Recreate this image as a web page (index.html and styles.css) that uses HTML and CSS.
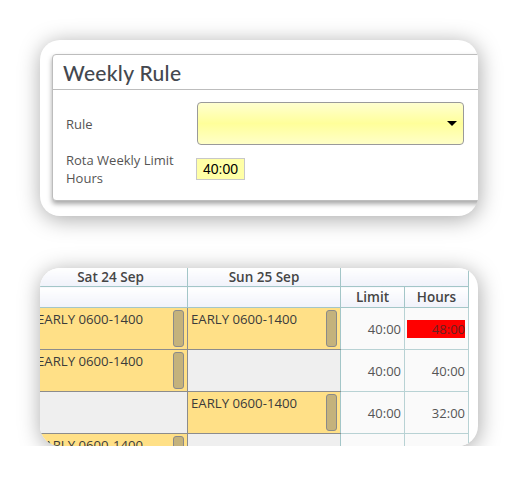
FILE: index.html
```html
<!DOCTYPE html>
<html>
<head>
<meta charset="utf-8">
<link rel="stylesheet" href="styles.css">
</head>
<body>
<div class="page">
  <div class="card card-top">
    <div class="panel">
      <div class="panel-head">Weekly Rule</div>
      <div class="panel-body">
        <div class="form-row">
          <div class="label">Rule</div>
          <div class="select"><span class="caret"></span></div>
        </div>
        <div class="form-row">
          <div class="label">Rota Weekly Limit Hours</div>
          <div class="input">40:00</div>
        </div>
      </div>
    </div>
  </div>

  <div class="card card-bottom">
    <table class="rota">
      <colgroup>
        <col class="c-day"><col class="c-day2"><col class="c-num"><col class="c-num">
      </colgroup>
      <thead>
        <tr class="h1">
          <th>Sat 24 Sep</th>
          <th>Sun 25 Sep</th>
          <th colspan="2"></th>
        </tr>
        <tr class="h2">
          <th></th>
          <th></th>
          <th>Limit</th>
          <th>Hours</th>
        </tr>
      </thead>
      <tbody>
        <tr>
          <td class="shift"><div class="shift-in"><span class="shift-name">EARLY 0600-1400</span><span class="handle"></span></div></td>
          <td class="shift"><div class="shift-in"><span class="shift-name">EARLY 0600-1400</span><span class="handle"></span></div></td>
          <td class="num">40:00</td>
          <td class="num"><span class="over">48:00</span></td>
        </tr>
        <tr>
          <td class="shift"><div class="shift-in"><span class="shift-name">EARLY 0600-1400</span><span class="handle"></span></div></td>
          <td class="empty"></td>
          <td class="num">40:00</td>
          <td class="num">40:00</td>
        </tr>
        <tr>
          <td class="empty"></td>
          <td class="shift"><div class="shift-in"><span class="shift-name">EARLY 0600-1400</span><span class="handle"></span></div></td>
          <td class="num">40:00</td>
          <td class="num">32:00</td>
        </tr>
        <tr>
          <td class="shift"><div class="shift-in"><span class="shift-name">EARLY 0600-1400</span><span class="handle"></span></div></td>
          <td class="empty"></td>
          <td class="num">40:00</td>
          <td class="num">40:00</td>
        </tr>
      </tbody>
    </table>
  </div>
</div>
</body>
</html>
```

FILE: styles.css
```css
html, body {
  margin: 0;
  padding: 0;
  background: #ffffff;
}
.page {
  display: flex;
  flex-direction: column;
  gap: 52px;
  padding: 40px 0 0 40px;
  font-family: "Open Sans", sans-serif;
}
.card {
  width: 438px;
  background: #ffffff;
  border-radius: 20px;
  overflow: hidden;
  box-shadow: 1px 3px 22px rgba(0, 0, 0, 0.35);
}
.card-top {
  height: 176px;
  padding: 14px 0 0 12px;
  box-sizing: border-box;
}
.panel {
  width: 520px;
  border: 1px solid #bdbdbd;
  border-radius: 4px 0 0 4px;
  background: #ffffff;
  box-shadow: 0 3px 5px rgba(0, 0, 0, 0.35);
}
.panel-head {
  height: 35px;
  border-bottom: 1px solid #bdbdbd;
  padding-left: 10px;
  box-sizing: border-box;
  font-family: "Lato", sans-serif;
  font-size: 21px;
  font-weight: 500;
  line-height: 36px;
  color: #44484f;
  letter-spacing: 0.3px;
}
.panel-body {
  padding: 12px 0 13px 13px;
  display: flex;
  flex-direction: column;
  gap: 6px;
}
.form-row {
  display: flex;
  align-items: center;
}
.label {
  width: 118px;
  margin-right: 13px;
  font-size: 13px;
  line-height: 18px;
  color: #555555;
}
.select {
  width: 267px;
  height: 43px;
  box-sizing: border-box;
  border: 1px solid #9a9a9a;
  border-radius: 4px;
  background: linear-gradient(to bottom, #ffffd0 0%, #ffff9a 50%, #ffffc8 100%);
  display: flex;
  align-items: center;
  justify-content: flex-end;
  padding-right: 6px;
}
.caret {
  width: 0;
  height: 0;
  border-left: 5px solid transparent;
  border-right: 5px solid transparent;
  border-top: 5px solid #000000;
}
.input {
  width: 49px;
  height: 22px;
  box-sizing: border-box;
  border: 1px solid #c8c8c8;
  background: #ffffa6;
  font-family: "Liberation Sans", Arial, sans-serif;
  font-size: 14px;
  line-height: 20px;
  color: #000000;
  padding-left: 6px;
  margin-left: -1px;
}

/* bottom table */
.card-bottom {
  height: 178px;
}
.rota {
  border-collapse: collapse;
  table-layout: fixed;
  width: 435px;
  margin-left: -7px;
  font-size: 13px;
  color: #333333;
}
.c-day { width: 154px; }
.c-day2 { width: 153px; }
.c-num { width: 64px; }
.rota th {
  font-weight: 600;
  color: #454545;
  background: linear-gradient(to bottom, #ffffff 0%, #f0f2fa 100%);
  border: 1px solid #a3c6c8;
  padding: 0;
  text-align: center;
  font-size: 13.5px;
}
.rota tr.h1 th {
  border-top: none;
  height: 18px;
  line-height: 18px;
}
.rota tr.h2 th {
  height: 19px;
  line-height: 20px;
}
.rota td {
  padding: 0;
  height: 41px;
  vertical-align: top;
}
.rota td.shift, .rota td.empty {
  border: 1px solid #8c8c8c;
  border-right-color: #a3c6c8;
}
.rota td:first-child {
  border-right-color: #8c8c8c;
}
.rota td.shift {
  background: #ffe087;
}
.rota td.empty {
  background: #efefef;
}
.shift-in {
  display: flex;
  justify-content: space-between;
  height: 41px;
  padding: 2px 3px 2px 3px;
  box-sizing: border-box;
}
.shift-name {
  line-height: 18px;
  font-size: 13.2px;
  color: #3b3b3b;
}
.handle {
  width: 11px;
  box-sizing: border-box;
  border: 1px solid #8a8a8a;
  border-radius: 3px;
  background: #c4b27c;
}
.rota td.num {
  border: 1px solid #b8d2d4;
  background: #fafafa;
  text-align: right;
  vertical-align: middle;
  padding-right: 3px;
  color: #555555;
}
.over {
  display: block;
  background: #ff0000;
  height: 18px;
  line-height: 18px;
  margin-left: 2px;
  overflow: hidden;
  color: #6b2020;
}
```
